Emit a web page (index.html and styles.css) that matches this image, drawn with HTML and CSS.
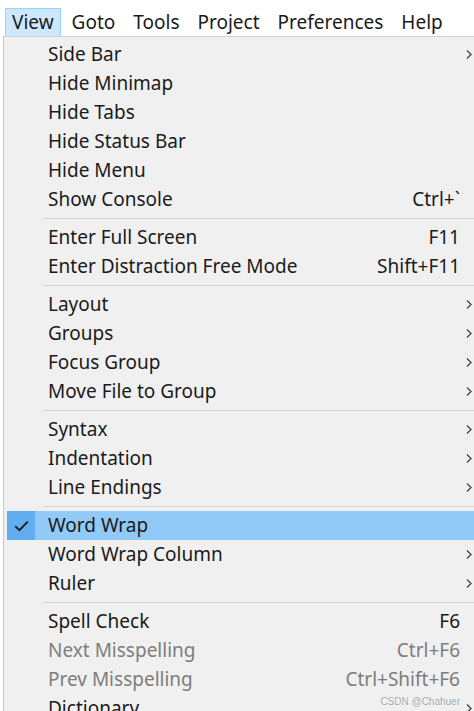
FILE: index.html
```html
<!DOCTYPE html>
<html>
<head>
<meta charset="utf-8">
<link rel="stylesheet" href="styles.css">
</head>
<body>
<div class="menubar">
  <span class="mb-item active">View</span>
  <span class="mb-item">Goto</span>
  <span class="mb-item">Tools</span>
  <span class="mb-item">Project</span>
  <span class="mb-item">Preferences</span>
  <span class="mb-item">Help</span>
</div>
<div class="menu">
  <div class="item"><span class="check"></span><span class="label">Side Bar</span><span class="key"></span><span class="sub"><svg width="6" height="9" viewBox="0 0 6 9"><path d="M1 0.6 L5 4.5 L1 8.4"/></svg></span></div>
  <div class="item"><span class="check"></span><span class="label">Hide Minimap</span><span class="key"></span><span class="sub"></span></div>
  <div class="item"><span class="check"></span><span class="label">Hide Tabs</span><span class="key"></span><span class="sub"></span></div>
  <div class="item"><span class="check"></span><span class="label">Hide Status Bar</span><span class="key"></span><span class="sub"></span></div>
  <div class="item"><span class="check"></span><span class="label">Hide Menu</span><span class="key"></span><span class="sub"></span></div>
  <div class="item"><span class="check"></span><span class="label">Show Console</span><span class="key">Ctrl+`</span><span class="sub"></span></div>
  <div class="sep"></div>
  <div class="item"><span class="check"></span><span class="label">Enter Full Screen</span><span class="key">F11</span><span class="sub"></span></div>
  <div class="item"><span class="check"></span><span class="label">Enter Distraction Free Mode</span><span class="key">Shift+F11</span><span class="sub"></span></div>
  <div class="sep"></div>
  <div class="item"><span class="check"></span><span class="label">Layout</span><span class="key"></span><span class="sub"><svg width="6" height="9" viewBox="0 0 6 9"><path d="M1 0.6 L5 4.5 L1 8.4"/></svg></span></div>
  <div class="item"><span class="check"></span><span class="label">Groups</span><span class="key"></span><span class="sub"><svg width="6" height="9" viewBox="0 0 6 9"><path d="M1 0.6 L5 4.5 L1 8.4"/></svg></span></div>
  <div class="item"><span class="check"></span><span class="label">Focus Group</span><span class="key"></span><span class="sub"><svg width="6" height="9" viewBox="0 0 6 9"><path d="M1 0.6 L5 4.5 L1 8.4"/></svg></span></div>
  <div class="item"><span class="check"></span><span class="label">Move File to Group</span><span class="key"></span><span class="sub"><svg width="6" height="9" viewBox="0 0 6 9"><path d="M1 0.6 L5 4.5 L1 8.4"/></svg></span></div>
  <div class="sep"></div>
  <div class="item"><span class="check"></span><span class="label">Syntax</span><span class="key"></span><span class="sub"><svg width="6" height="9" viewBox="0 0 6 9"><path d="M1 0.6 L5 4.5 L1 8.4"/></svg></span></div>
  <div class="item"><span class="check"></span><span class="label">Indentation</span><span class="key"></span><span class="sub"><svg width="6" height="9" viewBox="0 0 6 9"><path d="M1 0.6 L5 4.5 L1 8.4"/></svg></span></div>
  <div class="item"><span class="check"></span><span class="label">Line Endings</span><span class="key"></span><span class="sub"><svg width="6" height="9" viewBox="0 0 6 9"><path d="M1 0.6 L5 4.5 L1 8.4"/></svg></span></div>
  <div class="sep"></div>
  <div class="item selected"><span class="check"><svg width="15" height="12" viewBox="0 0 15 12"><path d="M1.2 6.2 L5.4 10.2 L13.8 1.6"/></svg></span><span class="label">Word Wrap</span><span class="key"></span><span class="sub"></span></div>
  <div class="item"><span class="check"></span><span class="label">Word Wrap Column</span><span class="key"></span><span class="sub"><svg width="6" height="9" viewBox="0 0 6 9"><path d="M1 0.6 L5 4.5 L1 8.4"/></svg></span></div>
  <div class="item"><span class="check"></span><span class="label">Ruler</span><span class="key"></span><span class="sub"><svg width="6" height="9" viewBox="0 0 6 9"><path d="M1 0.6 L5 4.5 L1 8.4"/></svg></span></div>
  <div class="sep"></div>
  <div class="item"><span class="check"></span><span class="label">Spell Check</span><span class="key">F6</span><span class="sub"></span></div>
  <div class="item disabled"><span class="check"></span><span class="label">Next Misspelling</span><span class="key">Ctrl+F6</span><span class="sub"></span></div>
  <div class="item disabled"><span class="check"></span><span class="label">Prev Misspelling</span><span class="key">Ctrl+Shift+F6</span><span class="sub"></span></div>
  <div class="item"><span class="check"></span><span class="label">Dictionary</span><span class="key"></span><span class="sub"><svg width="6" height="9" viewBox="0 0 6 9"><path d="M1 0.6 L5 4.5 L1 8.4"/></svg></span></div>
</div>
<div class="watermark">CSDN @Chahuer</div>
</body>
</html>
```
FILE: styles.css
```css
html, body {
  margin: 0;
  padding: 0;
}
body {
  width: 474px;
  height: 711px;
  overflow: hidden;
  background: #ffffff;
  font-family: "Noto Sans", "Open Sans", sans-serif;
  font-size: 19px;
  color: #1a1a1a;
  position: relative;
}
.menubar {
  box-sizing: border-box;
  height: 36px;
  padding: 8px 0 0 5px;
  display: flex;
  gap: 4px;
  background: #ffffff;
}
.mb-item {
  box-sizing: border-box;
  height: 28px;
  line-height: 26px;
  padding: 0 6px;
  border: 1px solid transparent;
  white-space: nowrap;
}
.mb-item.active {
  background: #cce8ff;
  border-color: #99d1ff;
  border-bottom-color: transparent;
}
.menu {
  margin-left: 3px;
  border-left: 1px solid #c6c6c6;
  border-top: 1px solid #d0d0d0;
  background: #f0f0f0;
  padding-top: 3px;
  height: 700px;
}
.item {
  margin-left: 3px;
  height: 29px;
  display: grid;
  grid-template-columns: 28px 1fr auto 14px;
  align-items: center;
  line-height: 29px;
  white-space: nowrap;
}
.check {
  height: 29px;
  display: flex;
  align-items: center;
  justify-content: center;
}
.check svg path {
  fill: none;
  stroke: #1a1a1a;
  stroke-width: 1.8;
}
.label {
  padding-left: 13px;
}
.key {
  text-align: right;
}
.sub {
  height: 29px;
  display: flex;
  align-items: center;
  padding-left: 6px;
}
.sub svg path {
  fill: none;
  stroke: #4a4a4a;
  stroke-width: 1.4;
}
.item.selected {
  background: #91c9f7;
}
.item.selected .check {
  background: #62acf0;
}
.item.disabled {
  color: #7d7d7d;
}
.sep {
  height: 1px;
  margin: 4px 0 4px 39px;
  background: #d4d4d4;
}
.watermark {
  position: absolute;
  right: 14px;
  bottom: 3px;
  font-family: "Liberation Sans", Arial, sans-serif;
  font-size: 10px;
  line-height: 12px;
  color: #a8a8a8;
  text-shadow: 0 0 2px #ffffff;
}
```
